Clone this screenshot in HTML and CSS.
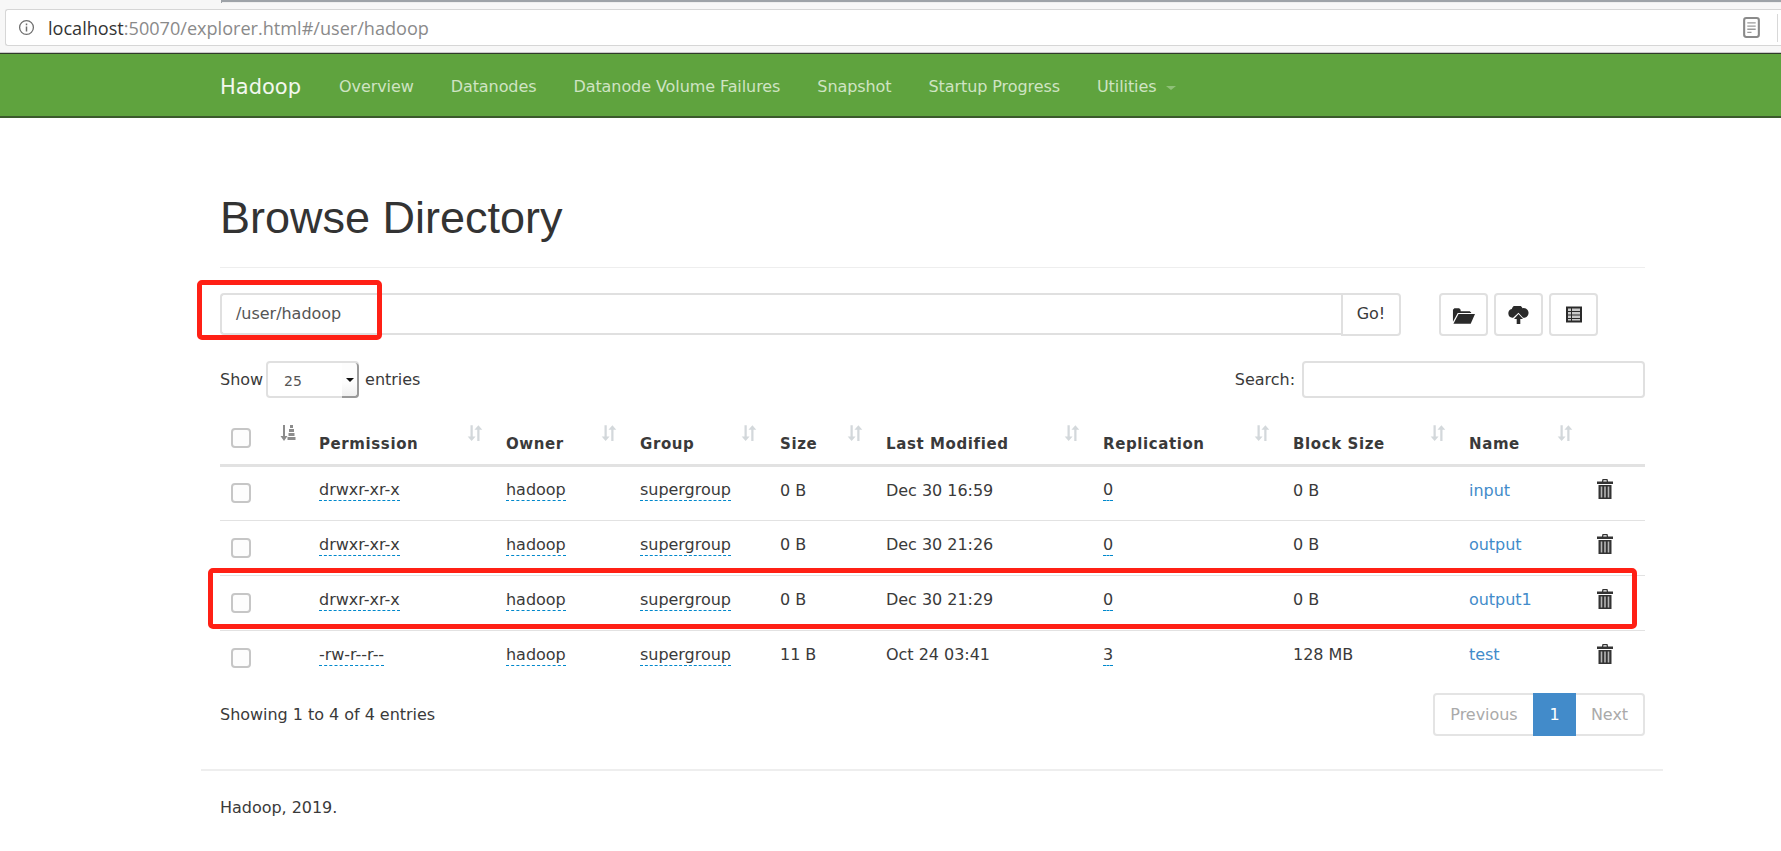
FILE: index.html
```html
<!DOCTYPE html>
<html lang="en">
<head>
<meta charset="utf-8">
<title>Browsing HDFS</title>
<link rel="stylesheet" href="styles.css">
</head>
<body>
<svg class="defs" width="0" height="0" aria-hidden="true">
  <symbol id="sort" viewBox="0 0 16 16"><path d="M4 1h2v10h2.500L5 15 1.500 11H4z M11 1l3.500 4H12v10h-2V5H7.500z"/></symbol>
  <symbol id="trash" viewBox="0 0 16 20"><path d="M5.500 0h5l.6 2.500H16v2.500H0V2.500h4.900z M6.500 1.200 6.200 2.500h3.600L9.500 1.200z" fill-rule="evenodd"/><path d="M1.500 6h13v14h-13z"/><path fill="#b5b5b5" d="M3.700 7.500h1.600v11H3.700z M7.200 7.500h1.600v11H7.200z M10.700 7.500h1.600v11h-1.600z"/></symbol>
</svg>

<div class="chrome">
  <div class="chrome-edge"></div>
  <div class="urlbar">
    <svg class="info" viewBox="0 0 16 16"><circle cx="8" cy="8" r="6.500" fill="none" stroke="#6e6e6e" stroke-width="1.200"/><path fill="#6e6e6e" d="M7.300 7h1.400v4.700H7.300z M7.300 4.300h1.400v1.500H7.300z"/></svg>
    <span class="url"><span class="url-host">localhost</span>:50070/explorer.html#/user/hadoop</span>
    <svg class="reader" viewBox="0 0 16 20"><rect x="1" y="1" width="14" height="18" rx="2" fill="#fff" stroke="#8a8a8a" stroke-width="2"/><path fill="#9a9a9a" d="M4 5h8v1.300H4z M4 8h8v1.300H4z M4 11h8v1.300H4z M4 14h4v1.300H4z"/></svg>
    <span class="bar-divider"></span>
  </div>
</div>

<nav class="navbar">
  <a class="brand">Hadoop</a>
  <a class="nav-link">Overview</a>
  <a class="nav-link">Datanodes</a>
  <a class="nav-link">Datanode Volume Failures</a>
  <a class="nav-link">Snapshot</a>
  <a class="nav-link">Startup Progress</a>
  <a class="nav-link">Utilities <span class="caret"></span></a>
</nav>

<main class="container">
  <div class="page-header"><h1>Browse Directory</h1></div>

  <div class="path-row">
    <div class="input-group">
      <div class="path-input">/user/hadoop</div>
      <div class="go-btn">Go!</div>
    </div>
    <div class="tool-btns">
      <div class="tool-btn"><svg class="tool-icon" viewBox="0 0 24 18"><path fill="#2a2a2a" d="M1 16V3.500L2.500 2h5L9 3.500V5h9.500L20 6.500V7H6L1 16z M6.800 8H24L19.500 18H1.500z"/></svg></div>
      <div class="tool-btn"><svg class="tool-icon" viewBox="0 0 24 20"><path fill="#2a2a2a" d="M6 13H5A5 5 0 0 1 4.500 3.200 6.500 6.500 0 0 1 16.500 2.500 5 5 0 1 1 19 13h-2l-5-5.500z"/><path fill="#2a2a2a" d="M12 9l5 5.500h-3V20h-4v-5.500H7z"/></svg></div>
      <div class="tool-btn"><svg class="tool-icon tool-icon-list" viewBox="0 0 16 16"><path fill="#2a2a2a" d="M0 0h16v16H0z"/><path fill="#c9c9c9" d="M2 2h3v2.500H2z M6 2h8v2.500H6z M2 5.500h3V8H2z M6 5.500h8V8H6z M2 9h3v2.500H2z M6 9h8v2.500H6z M2 12.500h3V14H2z M6 12.500h8V14H6z"/></svg></div>
    </div>
  </div>

  <div class="list-controls">
    <div class="length">Show
      <div class="select"><span class="select-value">25</span><span class="select-arrow"></span></div>
      entries
    </div>
    <div class="search">Search: <div class="search-input"></div></div>
  </div>

  <table class="files">
    <colgroup>
      <col class="c-check"><col class="c-sort"><col class="c-perm"><col class="c-owner"><col class="c-group"><col class="c-size"><col class="c-date"><col class="c-repl"><col class="c-block"><col class="c-name"><col class="c-del">
    </colgroup>
    <thead>
      <tr>
        <th class="check-head"><span class="checkbox"></span></th>
        <th class="sorted"><svg class="sort-icon sort-active" viewBox="0 0 16 18"><path d="M3 1h2v11h2.500L4 17 .5 12H3z M10 1h3v3h-3z M9 5h5v3H9z M8.500 9h6v3h-6z M7.500 13h8v3h-8z"/></svg></th>
        <th>Permission<svg class="sort-icon"><use href="#sort"/></svg></th>
        <th>Owner<svg class="sort-icon"><use href="#sort"/></svg></th>
        <th>Group<svg class="sort-icon"><use href="#sort"/></svg></th>
        <th>Size<svg class="sort-icon"><use href="#sort"/></svg></th>
        <th>Last Modified<svg class="sort-icon"><use href="#sort"/></svg></th>
        <th>Replication<svg class="sort-icon"><use href="#sort"/></svg></th>
        <th>Block Size<svg class="sort-icon"><use href="#sort"/></svg></th>
        <th>Name<svg class="sort-icon"><use href="#sort"/></svg></th>
        <th></th>
      </tr>
    </thead>
    <tbody>
      <tr>
        <td><span class="checkbox"></span></td><td></td>
        <td><span class="editable">drwxr-xr-x</span></td><td><span class="editable">hadoop</span></td><td><span class="editable">supergroup</span></td>
        <td>0 B</td><td>Dec 30 16:59</td><td><span class="editable">0</span></td><td>0 B</td>
        <td><a class="file-link">input</a></td><td><svg class="trash"><use href="#trash"/></svg></td>
      </tr>
      <tr>
        <td><span class="checkbox"></span></td><td></td>
        <td><span class="editable">drwxr-xr-x</span></td><td><span class="editable">hadoop</span></td><td><span class="editable">supergroup</span></td>
        <td>0 B</td><td>Dec 30 21:26</td><td><span class="editable">0</span></td><td>0 B</td>
        <td><a class="file-link">output</a></td><td><svg class="trash"><use href="#trash"/></svg></td>
      </tr>
      <tr>
        <td><span class="checkbox"></span></td><td></td>
        <td><span class="editable">drwxr-xr-x</span></td><td><span class="editable">hadoop</span></td><td><span class="editable">supergroup</span></td>
        <td>0 B</td><td>Dec 30 21:29</td><td><span class="editable">0</span></td><td>0 B</td>
        <td><a class="file-link">output1</a></td><td><svg class="trash"><use href="#trash"/></svg></td>
      </tr>
      <tr>
        <td><span class="checkbox"></span></td><td></td>
        <td><span class="editable">-rw-r--r--</span></td><td><span class="editable">hadoop</span></td><td><span class="editable">supergroup</span></td>
        <td>11 B</td><td>Oct 24 03:41</td><td><span class="editable">3</span></td><td>128 MB</td>
        <td><a class="file-link">test</a></td><td><svg class="trash"><use href="#trash"/></svg></td>
      </tr>
    </tbody>
  </table>

  <div class="table-foot">
    <div class="info-text">Showing 1 to 4 of 4 entries</div>
    <div class="pagination">
      <a class="page page-prev">Previous</a>
      <a class="page page-current">1</a>
      <a class="page page-next">Next</a>
    </div>
  </div>
</main>

<footer class="footer">
  <p class="footer-text">Hadoop, 2019.</p>
</footer>

<div class="callout callout-path"></div>
<div class="callout callout-row"></div>
</body>
</html>
```

FILE: styles.css
```css
* { box-sizing: border-box; }
html, body { margin: 0; padding: 0; height: 851px; overflow: hidden; }
body { background: #fff; color: #3a3a3a; font-family: "DejaVu Sans", sans-serif; font-size: 16px; letter-spacing: -.03px; position: relative; }
.defs { position: absolute; }

.chrome { height: 53px; background: #f7f7f7; padding: 9px 0 0 5px; position: relative; border-bottom: 1px solid #c8c8c8; }
.chrome-edge { position: absolute; left: 221px; right: 0; top: 0; height: 3px; background: #eee; border-top: 2px solid #9ea3a8; border-left: 1px solid #9ea3a8; }
.urlbar { height: 37px; background: #fff; border: 1px solid #d6d6d6; border-right: 0; border-radius: 3px 0 0 3px; display: flex; align-items: center; padding: 0 3px 0 12px; }
.info { width: 17px; height: 17px; margin-right: 13px; flex: none; }
.url { font-family: "Open Sans", sans-serif; font-size: 18.100px; letter-spacing: 0; color: #8a8a8a; flex: 1; }
.url-host { color: #333; }
.reader { width: 17px; height: 21px; flex: none; margin-right: 17px; }
.bar-divider { width: 1px; height: 28px; background: #d8d8d8; flex: none; }

.navbar { height: 65px; background: #5fa33e; border-top: 1px solid #2f3a2a; border-bottom: 2px solid #3b5a2c; display: flex; align-items: center; padding: 3px 0 0 220px; }
.brand { color: #f2f7ee; font-size: 21px; width: 119px; letter-spacing: 0; }
.nav-link { color: #cfe4c3; font-size: 16px; letter-spacing: -.08px; margin-right: 37px; white-space: nowrap; }
.caret { display: inline-block; width: 0; height: 0; margin-left: 4px; vertical-align: middle; border-top: 4px solid #8fc078; border-left: 5px solid transparent; border-right: 5px solid transparent; }

.container { width: 1425px; margin-left: 220px; }
.page-header { height: 150px; border-bottom: 1px solid #eee; padding-top: 75px; }
h1 { margin: 0; font-family: "Liberation Sans", sans-serif; font-weight: 400; font-size: 45px; line-height: 50px; letter-spacing: 0; color: #333; }

.path-row { display: flex; justify-content: space-between; margin-top: 25px; padding-right: 47px; height: 43px; }
.input-group { display: flex; width: 1181px; }
.path-input { flex: 1; height: 42px; border: 2px solid #e0e0e0; border-right: 0; border-radius: 4px 0 0 4px; padding: 0 14px; line-height: 38px; color: #555; }
.go-btn { width: 60px; height: 43px; border: 2px solid #e0e0e0; border-radius: 0 4px 4px 0; text-align: center; line-height: 38px; margin-left: -1px; }
.tool-btns { display: flex; gap: 6px; }
.tool-btn { width: 49px; height: 43px; border: 2px solid #e0e0e0; border-radius: 4px; display: flex; align-items: center; justify-content: center; }
.tool-icon { width: 23px; height: 18px; }
.tool-icon-list { width: 16px; height: 17px; }

.list-controls { display: flex; justify-content: space-between; align-items: center; margin-top: 25px; height: 37px; }
.length { display: flex; align-items: center; gap: 3px; }
.select { width: 93px; height: 37px; border: 2px solid #e0e0e0; border-radius: 4px; position: relative; padding-left: 16px; line-height: 37px; font-size: 14px; color: #555; margin: 0 3px 0 0; }
.select-arrow { position: absolute; top: 0; right: -2px; bottom: -2px; width: 17px; background: linear-gradient(#fdfdfd 60%, #f0f0f0); border-right: 2px solid #999; border-bottom: 2px solid #999; border-radius: 0 4px 4px 0; }
.select-arrow::after { content: ""; position: absolute; left: 4px; top: 15px; border-top: 4px solid #111; border-left: 4px solid transparent; border-right: 4px solid transparent; }
.search { display: flex; align-items: center; gap: 7px; }
.search-input { width: 343px; height: 37px; border: 2px solid #e0e0e0; border-radius: 4px; }

.files { width: 1425px; table-layout: fixed; border-collapse: collapse; margin-top: 18px; }
.c-check { width: 48px; } .c-sort { width: 38px; } .c-perm { width: 187px; } .c-owner { width: 134px; }
.c-group { width: 140px; } .c-size { width: 106px; } .c-date { width: 217px; } .c-repl { width: 190px; }
.c-block { width: 176px; } .c-name { width: 127px; } .c-del { width: 62px; }
.files th { height: 49px; border-bottom: 3px solid #e2e2e2; text-align: left; padding: 8px 0 0 13px; position: relative; font-weight: 700; font-size: 15px; letter-spacing: .6px; vertical-align: middle; }
.files th.check-head, .files td:first-child { padding-left: 11px; }
.files th.check-head { padding-top: 0; padding-bottom: 3px; }
.files td { height: 55px; padding: 0 0 6px 13px; border-bottom: 1px solid #e2e2e2; vertical-align: middle; }
.files tbody tr:last-child td { border-bottom: 0; }
.files td:first-child { padding-bottom: 0; padding-top: 0; }
.checkbox { display: block; width: 20px; height: 20px; border: 2px solid #c6c6c6; border-radius: 4px; background: #fdfdfd; }
.sort-icon { position: absolute; right: 9px; top: 8px; width: 18px; height: 18px; fill: #d3d8db; }
.sort-active { fill: #8c8c8c; }
.editable { border-bottom: 1px dashed #0088cc; display: inline-block; line-height: 21px; }
.file-link { color: #428bca; }
.trash { display: block; width: 16px; height: 20px; fill: #333; margin: -2px 0 0 1px; }

.table-foot { display: flex; justify-content: space-between; align-items: center; margin-top: 6px; height: 46px; }
.pagination { display: flex; height: 43px; width: 212px; border: 2px solid #e4e4e4; border-radius: 4px; color: #aaa; line-height: 39px; text-align: center; }
.page-prev { width: 98px; }
.page-current { width: 43px; margin: -2px 0; background: #428bca; color: #fff; line-height: 43px; }
.page-next { flex: 1; }

.footer { margin: 32px 118px 0 201px; border-top: 2px solid #eee; padding: 27px 0 0 19px; }
.footer-text { margin: 0; }

.callout { position: absolute; border: 5px solid #ff2015; border-radius: 5px; }
.callout-path { left: 197px; top: 280px; width: 185px; height: 60px; }
.callout-row { left: 208px; top: 568px; width: 1429px; height: 61px; }
```
